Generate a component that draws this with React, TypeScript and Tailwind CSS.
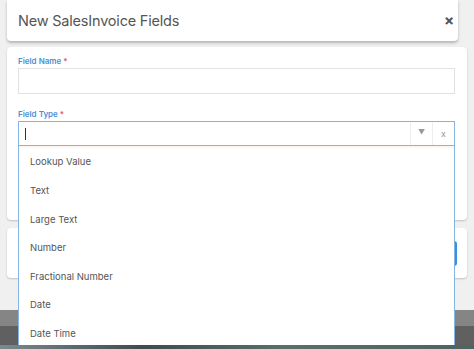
const fieldTypes = [
  "Lookup Value",
  "Text",
  "Large Text",
  "Number",
  "Fractional Number",
  "Date",
  "Date Time",
];

function Label({ text }: { text: string }) {
  return (
    <div className="mb-[2px] text-[8px] font-semibold leading-[10px] text-[#4a8fd6]">
      {text} <span className="text-[#e0566a]">*</span>
    </div>
  );
}

export default function App() {
  return (
    <div
      className="relative flex h-[349px] w-[474px] flex-col overflow-hidden bg-[#f0f0f0] text-[#555]"
      style={{ fontFamily: "Inter, 'Noto Sans', sans-serif" }}
    >
      {/* header */}
      <div className="ml-[7px] flex h-[41px] w-[451px] shrink-0 items-center justify-between rounded-b-[4px] bg-white pl-[11px] pr-[3px] shadow-[0_2px_3px_rgba(0,0,0,0.25)]">
        <span className="text-[14.5px] tracking-[-0.2px] text-[#555]">New SalesInvoice Fields</span>
        <span className="w-[12px] text-center text-[15px] font-bold leading-none text-[#555]">×</span>
      </div>

      {/* form card */}
      <div className="ml-[7px] mt-[6px] h-[173px] w-[460px] shrink-0 rounded-[4px] bg-white px-[11px] pt-[9px] shadow-[0_1px_2px_rgba(0,0,0,0.2)]">
        <Label text="Field Name" />
        <div className="h-[26px] w-[437px] border border-[#e2e2e2]" />
        <div className="mt-[15px]">
          <Label text="Field Type" />
        </div>
        <div className="relative w-[437px]">
          <div className="flex h-[25px] items-center border border-[#86b4e2] bg-white">
            <div className="flex-1 pl-[6px]">
              <div className="h-[12px] w-[1px] bg-[#333]" />
            </div>
            <div className="flex h-full w-[22px] items-center justify-center border-l border-[#eeeeee] text-[7px] text-[#999]">
              ▼
            </div>
            <div className="flex h-full w-[22px] items-center justify-center border-l border-[#eeeeee] text-[9px] text-[#999]">
              x
            </div>
          </div>
          {/* dropdown list */}
          <div className="absolute left-0 top-[25px] z-10 h-[199px] w-[437px] overflow-hidden border-x border-[#86b4e2] bg-white">
            <div className="h-[2px] bg-[#fff7ef]" />
            <div className="flex flex-col">
              {fieldTypes.map((t) => (
                <div key={t} className="flex h-[28.67px] items-center pl-[11px] text-[9.5px] text-[#555]">
                  {t}
                </div>
              ))}
            </div>
          </div>
          <div className="mt-[14px] h-[20px] w-[437px] border border-[#e2e2e2]" />
        </div>
      </div>

      {/* actions card */}
      <div className="ml-[7px] mt-[8px] flex h-[50px] w-[460px] shrink-0 items-center justify-end rounded-[4px] bg-white pr-[10px] shadow-[0_1px_2px_rgba(0,0,0,0.2)]">
        <div className="h-[25px] w-[8px] rounded-r-[3px] bg-[#3b8de0]" />
      </div>

      <div className="mt-[32px] h-[16px] shrink-0 bg-[#858585]" />
      <div className="h-[19px] shrink-0 bg-[#606060]" />
      <div className="h-[4px] shrink-0 bg-[linear-gradient(90deg,#7b8a8f_0%,#3f4b4f_30%,#58706a_60%,#4f6360_100%)]" />
    </div>
  );
}
